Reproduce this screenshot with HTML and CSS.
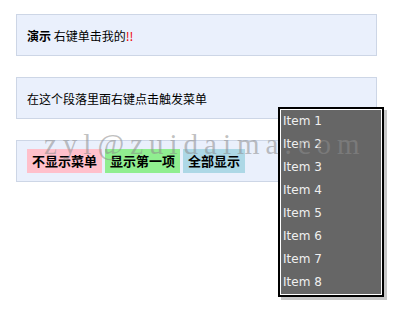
FILE: index.html
```html
<!DOCTYPE html>
<html lang="zh-CN">
<head>
    <meta charset="UTF-8">
    <title>右键菜单演示</title>
    <link rel="stylesheet" href="styles.css">
</head>
<body>
    <div class="box">
        <p><b>演示</b> 右键单击我的<span class="red">!!</span></p>
    </div>

    <div class="box">
        <p>在这个段落里面右键点击触发菜单</p>
    </div>

    <div class="box">
        <span class="btn pink">不显示菜单</span>
        <span class="btn green">显示第一项</span>
        <span class="btn blue">全部显示</span>
    </div>

    <!-- context menu -->
    <div class="menu">
        <ul>
            <li>Item 1</li>
            <li>Item 2</li>
            <li>Item 3</li>
            <li>Item 4</li>
            <li>Item 5</li>
            <li>Item 6</li>
            <li>Item 7</li>
            <li>Item 8</li>
        </ul>
    </div>

    <div class="watermark">zyl@zuidaima.com</div>
</body>
</html>
```

FILE: styles.css
```css
body {
    margin: 0;
    padding: 14px 16px;
    font-family: "Noto Sans CJK SC", sans-serif;
    font-size: 12px;
    color: #000;
    background: #fff;
}

.box {
    width: 340px;
    height: 40px;
    padding: 0 9px 0 10px;
    margin-bottom: 21px;
    border: 1px solid #cdd6e6;
    background-color: #eaf0fc;
    display: flex;
    align-items: center;
    gap: 3px;
}

.box p {
    margin: 0;
}

.red {
    color: #e00;
}

.btn {
    font-size: 13px;
    font-weight: bold;
    line-height: 14px;
    padding: 5px;
}

.pink {
    background-color: #ffc0cb;
}

.green {
    background-color: #90ee90;
}

.blue {
    background-color: #add8e6;
}

.menu {
    position: absolute;
    left: 278px;
    top: 107px;
    border: 2px solid #000;
    padding: 1px;
    background: #fff;
    box-shadow: 3px 3px 0 #c8c8c8;
}

.menu ul {
    list-style: none;
    margin: 0;
    padding: 0;
    width: 100px;
    background-color: #666;
}

.menu li {
    height: 23px;
    line-height: 23px;
    padding-left: 2px;
    font-family: "DejaVu Sans", sans-serif;
    font-size: 12px;
    color: #f0f0f0;
}

.watermark {
    position: absolute;
    left: 44px;
    top: 128px;
    font-family: "Liberation Serif", serif;
    font-size: 29px;
    letter-spacing: 6px;
    color: rgba(140, 140, 140, 0.55);
    pointer-events: none;
}
```
